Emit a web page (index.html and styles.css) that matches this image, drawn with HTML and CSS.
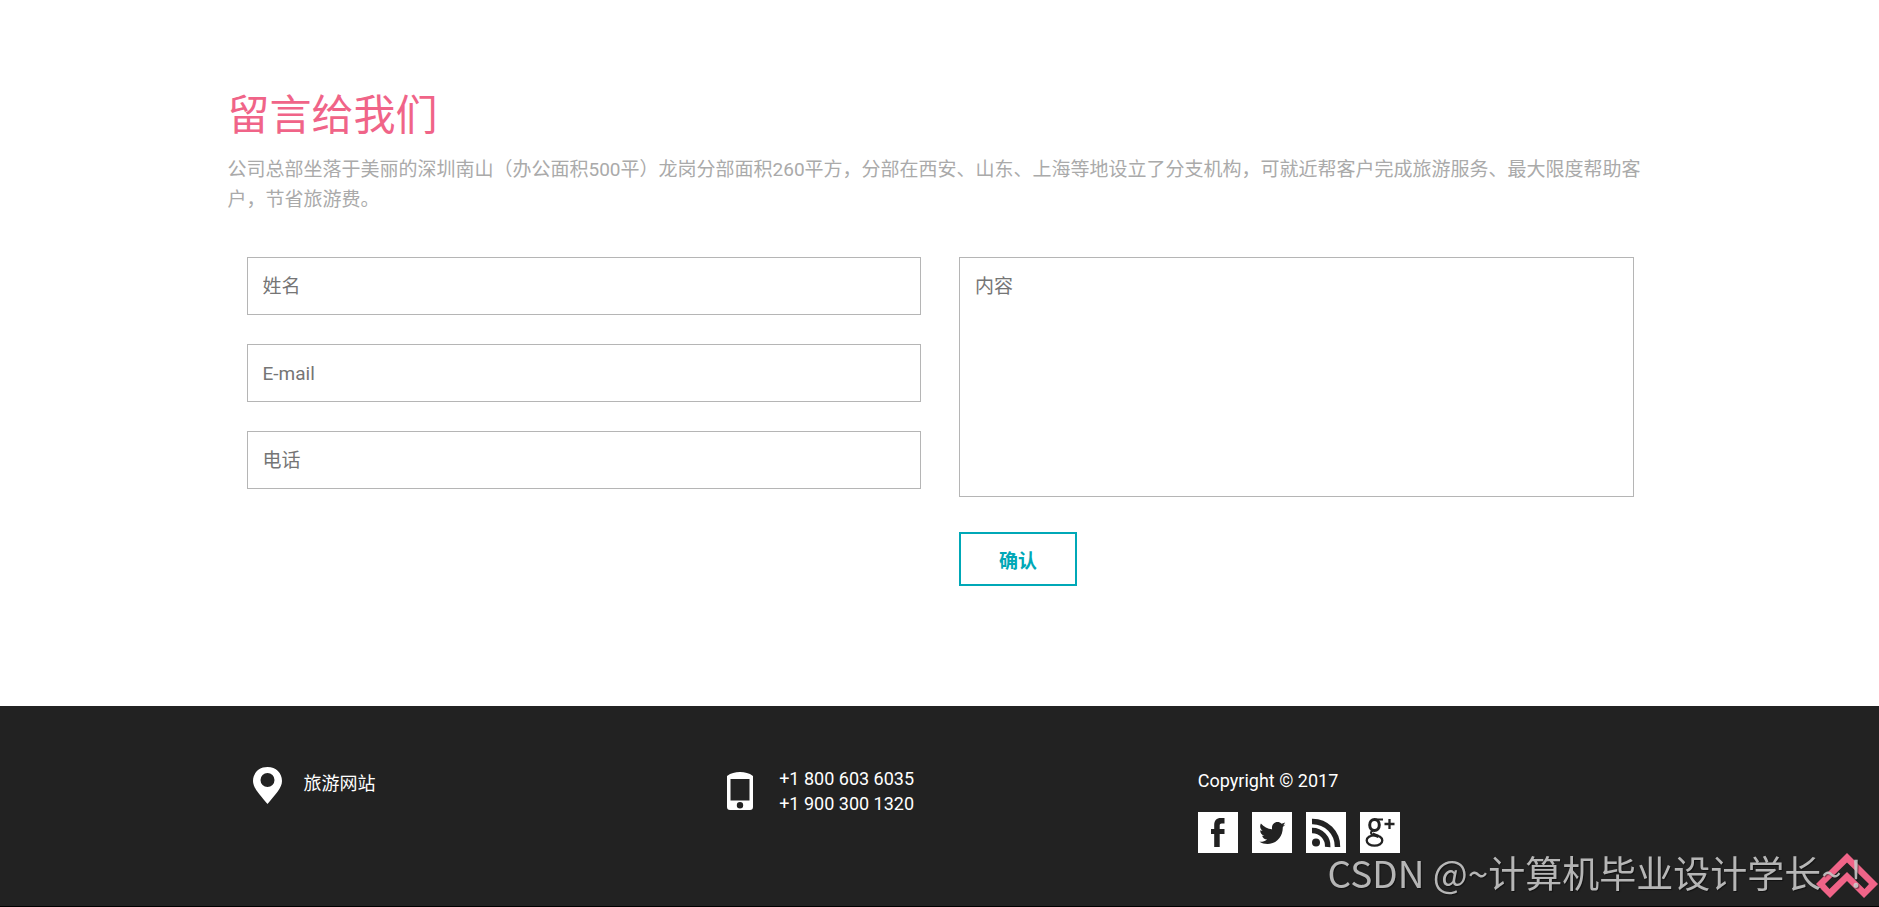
FILE: index.html
```
<!DOCTYPE html>
<html lang="zh-CN">
  <head>
    <meta charset="UTF-8" />
    <meta name="viewport" content="width=device-width, initial-scale=1.0" />
    <title>留言给我们</title>
    <link rel="stylesheet" href="styles.css">
  </head>
  <body>
    <main class="contact container">
      <h2>留言给我们</h2>
      <p class="intro">公司总部坐落于美丽的深圳南山（办公面积500平）龙岗分部面积260平方，分部在西安、山东、上海等地设立了分支机构，可就近帮客户完成旅游服务、最大限度帮助客户，节省旅游费。</p>

      <form class="contact-form">
        <div class="form-left">
          <input type="text" name="name" placeholder="姓名" aria-label="姓名" />
          <input type="email" name="email" placeholder="E-mail" aria-label="E-mail" />
          <input type="tel" name="phone" placeholder="电话" aria-label="电话" />
        </div>
        <div class="form-right">
          <textarea name="content" placeholder="内容" aria-label="内容"></textarea>
          <button type="submit">确认</button>
        </div>
      </form>
    </main>

    <footer class="footer">
      <div class="footer-grid container">
        <div class="footer-col address">
          <svg class="pin" viewBox="0 0 29 37" aria-hidden="true">
            <path fill="#fff" fill-rule="evenodd" d="M14.500 0C6 0 0 6 0 14c0 7 7 14 14.500 23C22 28 29 21 29 14 29 6 23 0 14.500 0zm0 6a7 7 0 1 1 0 14 7 7 0 0 1 0-14z" />
          </svg>
          <span>旅游网站</span>
        </div>
        <div class="footer-col phones">
          <svg class="mobile" viewBox="0 0 26 38" aria-hidden="true">
            <path fill="#fff" fill-rule="evenodd" d="M0 4C4 1 8 0 13 0s9 1 13 4v31q0 3-3 3H3q-3 0-3-3zM3.500 7v21.500h19V7zM13 30a3.200 3.200 0 1 0 0 6.400 3.200 3.200 0 0 0 0-6.400z" />
          </svg>
          <div>
            <p>+1 800 603 6035</p>
            <p>+1 900 300 1320</p>
          </div>
        </div>
        <div class="footer-col copy">
          <p>Copyright © 2017</p>
          <div class="social">
            <a href="#" aria-label="Facebook">
              <svg viewBox="0 0 40 40"><path fill="#222" d="M26.500 6v5.500h-2.800c-1.500 0-2 .8-2 2V17h4.800v5h-4.800v13h-5.500V22H13v-5h3.200v-4c0-4.500 2.500-7 6.500-7z" /></svg>
            </a>
            <a href="#" aria-label="Twitter">
              <svg viewBox="0 0 40 40"><path fill="#222" d="M33.500 12.500l-2.700 2.600C31 24.500 24.500 32 15.500 32c-3 0-5.600-.7-8-2.200 3 .2 5.500-.6 7.600-2.300-2.500-.2-4.300-1.600-5-3.800h2.300c-2.700-.8-4.200-2.800-4.200-5.500l2.300.7c-2.400-2-3-4.700-1.600-7.400 3 3.600 6.700 5.500 11.200 5.800-.8-4 1.800-7.300 5.400-7.300 1.700 0 3 .6 4.100 1.700l3.600-1.300-2 3z" /></svg>
            </a>
            <a href="#" aria-label="RSS">
              <svg viewBox="0 0 40 40"><circle cx="10" cy="30.500" r="4" fill="#222" /><path fill="none" stroke="#222" stroke-width="5.500" d="M6 18.500A15.500 15.500 0 0 1 21.700 35M6 9.500A25 25 0 0 1 31.500 35" /></svg>
            </a>
            <a href="#" aria-label="Google+">
              <svg viewBox="0 0 40 40"><g fill="none" stroke="#222"><ellipse cx="14.500" cy="13" rx="4.800" ry="5.500" stroke-width="3" /><path stroke-width="2" d="M14 7.500h9M13 18.500c-3 1.500-2.500 3.500 0 4.500" /><path stroke-width="3" d="M12.500 22l6 2.500" /><ellipse cx="14.500" cy="28.500" rx="7.800" ry="5.200" stroke-width="2.300" /><path stroke-width="2.300" d="M24.500 12h10M29.500 7v10" /></g></svg>
            </a>
          </div>
        </div>
      </div>
    </footer>

    <a class="to-top" href="#" aria-label="返回顶部">
      <svg viewBox="0 0 62 45"><path fill="#f06488" fill-rule="evenodd" d="M31 0L62 31 48 45 31 28 14 45 0 31zM31 9.500L9 31l4.500 5L31 19l17.500 17 4.500-5z" /></svg>
    </a>
    <div class="watermark">CSDN @~计算机毕业设计学长~ !</div>
  </body>
</html>
```
FILE: styles.css
```
* {
  box-sizing: border-box;
}

body {
  margin: 0;
  font-family: Roboto, "Noto Sans CJK SC", sans-serif;
  background-color: #fff;
  border-bottom: 1px solid #000;
}

h2,
p {
  margin: 0;
}

.container {
  width: 92%;
  max-width: 1424px;
  margin: 0 auto;
}

.contact {
  padding: 86px 0 120px;
}

.contact h2 {
  color: #f06488;
  font-size: 42px;
  font-weight: 400;
  line-height: 60px;
}

.intro {
  margin-top: 9px;
  color: #aaa;
  font-size: 19px;
  line-height: 30px;
}

.contact-form {
  display: grid;
  grid-template-columns: 1fr 1fr;
  gap: 38px;
  padding: 42px 18px 0 19px;
}

.form-left {
  display: flex;
  flex-direction: column;
  gap: 29px;
}

.form-right {
  display: flex;
  flex-direction: column;
  align-items: flex-start;
  gap: 35px;
}

input,
textarea {
  display: block;
  width: 100%;
  padding: 15px;
  border: 1px solid #b5b5b5;
  border-radius: 0;
  background-color: #fff;
  font-family: inherit;
  font-size: 19px;
  line-height: 28px;
  outline: none;
}

input {
  height: 58px;
}

textarea {
  height: 240px;
  resize: none;
}

input::placeholder,
textarea::placeholder {
  color: #757575;
}

button {
  height: 54px;
  padding: 0 38px;
  border: 2px solid #00a8b7;
  background-color: #fff;
  color: #00a8b7;
  font-family: inherit;
  font-size: 19px;
  font-weight: bold;
  cursor: pointer;
}

button:hover {
  background-color: #00a8b7;
  color: #fff;
}

.footer {
  min-height: 200px;
  padding: 60px 0 52px;
  background-color: #222;
  color: #fff;
  font-size: 18px;
  line-height: 25px;
}

.footer-grid {
  display: grid;
  grid-template-columns: repeat(3, 1fr);
}

.footer-col {
  padding-left: 25px;
}

.address,
.phones {
  display: flex;
  align-items: flex-start;
}

.address {
  gap: 22px;
}

.address span {
  padding-top: 5px;
}

.phones {
  gap: 26px;
}

.pin {
  width: 29px;
  height: 37px;
  margin-top: 1px;
}

.mobile {
  width: 26px;
  height: 38px;
  margin-top: 6px;
}

.copy {
  padding: 2px 0 0 21px;
}

.social {
  display: flex;
  gap: 14px;
  margin-top: 19px;
}

.social a {
  width: 40px;
  height: 41px;
  background-color: #fff;
}

.social svg,
.to-top svg {
  display: block;
  width: 100%;
}

.to-top {
  position: fixed;
  right: 1px;
  bottom: 9px;
  width: 62px;
}

.watermark {
  position: fixed;
  right: 17px;
  bottom: 8px;
  color: rgba(210, 210, 210, 0.85);
  font-family: "Noto Sans CJK SC", sans-serif;
  font-size: 37px;
  line-height: 54px;
  text-shadow: 1px 1px 1px rgba(0, 0, 0, 0.5);
  white-space: nowrap;
  pointer-events: none;
}
```
